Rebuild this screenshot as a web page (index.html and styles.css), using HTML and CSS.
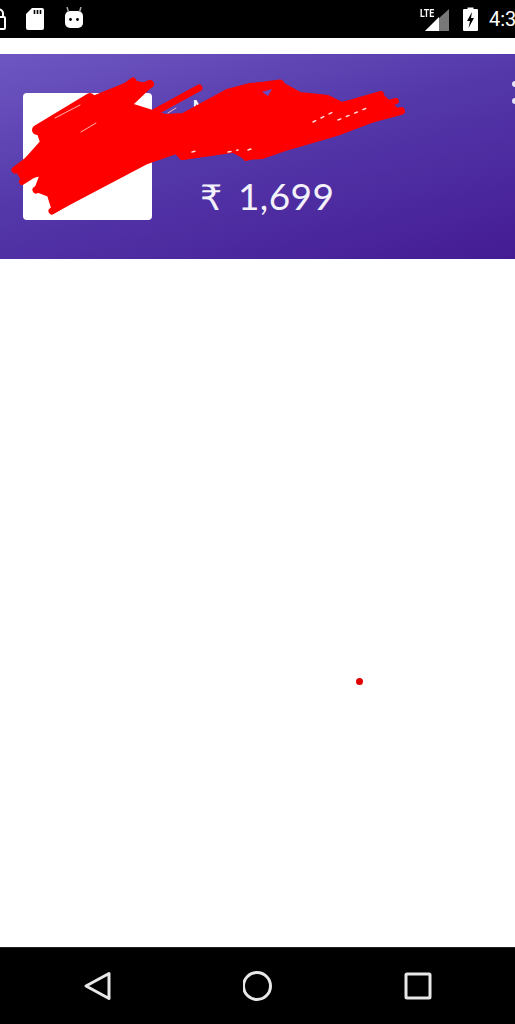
FILE: index.html
```html
<!DOCTYPE html>
<html lang="en">
<head>
<meta charset="utf-8">
<title>Order</title>
<link rel="stylesheet" href="styles.css">
</head>
<body>
<div class="screen">
  <header class="status">
    <div class="status-left">
      <svg class="icon-lock" width="14" height="24" viewBox="0 0 14 24"><path d="M3 10V6.500a4 4 0 0 1 8 0V10" fill="none" stroke="#fff" stroke-width="2"/><rect x="1" y="10" width="12" height="12" rx="1" fill="none" stroke="#fff" stroke-width="2"/></svg>
      <svg width="20" height="24" viewBox="0 0 20 24"><path d="M7 1H17a2 2 0 0 1 2 2V21a2 2 0 0 1-2 2H3a2 2 0 0 1-2-2V7z" fill="#fff"/><path d="M9.500 3v4M12.500 3v4M15.500 3v4" stroke="#000" stroke-width="1.600"/></svg>
      <svg width="20" height="24" viewBox="0 0 20 24"><path d="M1 9a5 5 0 0 1 5-5H14a5 5 0 0 1 5 5v7a5 5 0 0 1-5 5H6a5 5 0 0 1-5-5z" fill="#fff"/><path d="M4.500 5 3 0M15.500 5 17 0" stroke="#aaa" stroke-width="1.500"/><circle cx="6.500" cy="12.500" r="1.400" fill="#000"/><circle cx="13.500" cy="12.500" r="1.400" fill="#000"/></svg>
    </div>
    <div class="status-right">
      <div class="signal">
        <span class="lte">LTE</span>
        <svg width="25" height="22" viewBox="0 0 25 22"><path d="M24 0V22H0z" fill="#777"/><path d="M14 10V22H0L14 8z" fill="#fff"/></svg>
      </div>
      <svg class="battery" width="15" height="24" viewBox="0 0 15 24"><path d="M4.500 2V0.500h6V2H14a1 1 0 0 1 1 1V23a1 1 0 0 1-1 1H1a1 1 0 0 1-1-1V3a1 1 0 0 1 1-1z" fill="#fff"/><path d="M9 5 4 14h3l-1.500 7L11 11H8z" fill="#000"/></svg>
      <span class="time">4:3</span>
    </div>
  </header>
  <div class="gap"></div>
  <section class="banner">
    <div class="thumb"></div>
    <div class="info">
      <div class="title">M</div>
      <div class="price"><span class="rupee">₹</span><span class="amount">1,699</span></div>
    </div>
    <div class="more"><span></span><span></span></div>
    <svg class="scribble" viewBox="0 54 515 205" width="515" height="205">
      <path d="M17 170 42 142 38 130 90 99 132 82 150 86 130 105 165 116 183 115 227 91 250 85 280 83 300 94 328 97 342 104 382 96 398 111 340 133 285 149 262 157 246 158 232 150 182 158 176 152 147 162 54 211 49 195 36 190 42 174 22 178Z" fill="#f00" stroke="#f00" stroke-width="4" stroke-linejoin="round"/>
      <g fill="none" stroke="#f00" stroke-linecap="round" stroke-linejoin="round">
        <path d="M37 130 90 98" stroke-width="10"/>
        <path d="M15 170 133 81" stroke-width="7"/>
        <path d="M97 107 150 84" stroke-width="8"/>
        <path d="M155 112 199 88" stroke-width="7"/>
        <path d="M22 182 60 158" stroke-width="6"/>
        <path d="M36 190 80 160" stroke-width="7"/>
        <path d="M52 211 130 165" stroke-width="7"/>
        <path d="M250 88 280 84" stroke-width="9"/>
        <path d="M312 114 381 94" stroke-width="6"/>
        <path d="M320 122 396 101" stroke-width="6"/>
        <path d="M300 138 401 111" stroke-width="8"/>
        <path d="M182 157 232 150" stroke-width="6"/>
        <path d="M246 158 300 142" stroke-width="6"/>
      </g>
      <g fill="none" stroke-linecap="round">
        <path class="gap-pink" d="M55 118 80 105M81 132 96 123M168 113 176 108"/>
        <path class="gap-purple" d="M262 92 272 89 268 96Z"/>
        <path class="gap-white" d="M313 122 333 112M338 120 367 108M192 152 196 151M228 152 238 150M248 150 251 149"/>
      </g>
    </svg>
  </section>
  <main class="content">
    <span class="dot"></span>
  </main>
  <footer class="nav">
    <svg width="30" height="32" viewBox="0 0 30 32"><path d="M26 3.500V28.500L3 16Z" fill="none" stroke="#e8e8e8" stroke-width="3" stroke-linejoin="round"/></svg>
    <svg width="30" height="32" viewBox="0 0 30 32"><circle cx="14" cy="16" r="13.500" fill="none" stroke="#e8e8e8" stroke-width="3"/></svg>
    <svg width="30" height="32" viewBox="0 0 30 32"><rect x="3" y="4" width="24" height="24" rx="1" fill="none" stroke="#e8e8e8" stroke-width="3"/></svg>
  </footer>
</div>
</body>
</html>
```

FILE: styles.css
```css
* {
  box-sizing: border-box;
}

html,
body {
  margin: 0;
  padding: 0;
  background: #fff;
}

.screen {
  width: 515px;
  height: 1024px;
  display: flex;
  flex-direction: column;
  overflow: hidden;
  font-family: Lato, "Liberation Sans", sans-serif;
}

.status {
  flex: 0 0 38px;
  background: #000;
  display: flex;
  align-items: center;
  overflow: hidden;
}

.status-left {
  flex: 0 0 420px;
  display: flex;
  align-items: center;
  gap: 19px;
}

.status-left svg {
  display: block;
  flex: none;
}

.icon-lock {
  margin-left: -8px;
}

.status-right {
  flex: none;
  display: flex;
  align-items: center;
}

.signal {
  position: relative;
  width: 30px;
  height: 24px;
  display: flex;
  justify-content: flex-end;
  align-items: flex-end;
}

.lte {
  position: absolute;
  left: 0;
  top: 1px;
  color: #fff;
  font: bold 11px/11px Roboto, sans-serif;
  transform: scaleX(0.8);
  transform-origin: left top;
}

.battery {
  display: block;
  margin-left: 13px;
}

.time {
  margin-left: 11px;
  color: #fff;
  font: 400 20px/24px Roboto, sans-serif;
  white-space: nowrap;
}

.gap {
  flex: 0 0 16px;
  background: #fff;
}

.banner {
  position: relative;
  flex: 0 0 205px;
  padding: 39px 0 0 23px;
  display: flex;
  align-items: flex-start;
  background: linear-gradient(165deg, #6e57c2 0%, #5438aa 45%, #441b93 100%);
}

.thumb {
  width: 129px;
  height: 127px;
  background: #fff;
  border-radius: 4px;
}

.info {
  margin-left: 40px;
  color: #fff;
}

.title {
  font-size: 22px;
  line-height: 22px;
  height: 78px;
  margin-top: 3px;
}

.price {
  display: flex;
  align-items: baseline;
  margin-left: 8px;
  line-height: 44px;
  white-space: nowrap;
  color: #f3f1fa;
}

.rupee {
  width: 38px;
  font-family: "DejaVu Sans", sans-serif;
  font-size: 35px;
}

.amount {
  font-size: 37px;
  font-weight: 400;
  letter-spacing: 0.4px;
}

.more {
  position: absolute;
  right: -3px;
  top: 27px;
  display: flex;
  flex-direction: column;
  gap: 11px;
}

.more span {
  display: block;
  width: 6px;
  height: 6px;
  border-radius: 50%;
  background: #e8e4f4;
}

.scribble {
  position: absolute;
  left: 0;
  top: 0;
  display: block;
  filter: blur(0.6px);
}

.gap-pink {
  stroke: #ffb0b0;
  stroke-width: 1;
}

.gap-purple {
  fill: #6a4cc0;
}

.gap-white {
  stroke: #ffd8d8;
  stroke-width: 1.5;
  stroke-dasharray: 3 6;
}

.content {
  position: relative;
  flex: 1;
  background: #fff;
}

.dot {
  position: absolute;
  left: 356px;
  top: 419px;
  width: 7px;
  height: 7px;
  border-radius: 50%;
  background: #e00000;
}

.nav {
  flex: 0 0 77px;
  background: #000;
  display: flex;
  justify-content: center;
  align-items: center;
  gap: 130px;
  border-top: 1px solid #222;
}

.nav svg {
  display: block;
}
```
